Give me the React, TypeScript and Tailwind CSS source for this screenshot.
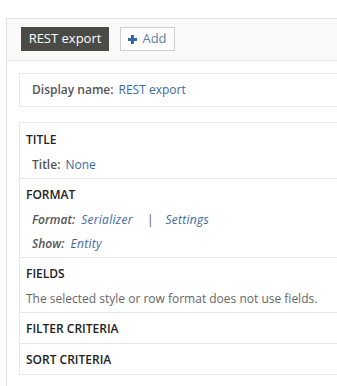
import React from "react";

const font = { fontFamily: '"Open Sans", "Noto Sans", sans-serif' };

const Section = ({
  title,
  children,
}: {
  title: string;
  children?: React.ReactNode;
}) => (
  <div
    className={`border-t border-[#e6e6e6] first:border-t-0 pt-[7px] first:pt-2 ${
      children ? "pb-px" : "pb-[5px]"
    }`}
  >
    <div className="h-[18px] leading-[18px] pl-[6px] text-[12px] font-semibold text-[#222]">
      {title}
    </div>
    {children && <div className="mt-1">{children}</div>}
  </div>
);

const Row = ({ children }: { children: React.ReactNode }) => (
  <div className="h-6 flex items-center pl-3 text-[12px]">{children}</div>
);

export default function App() {
  return (
    <div className="w-[337px] h-[386px] overflow-hidden bg-white" style={font}>
      <div className="pt-[18px] pl-[6px]">
        <div className="w-[420px] h-[368px] border-l border-t border-[#e3e3e3]">
          {/* tab bar */}
          <div className="h-[42px] bg-[#f9f9f9] border-b border-[#e6e6e6] flex items-start pt-2 pl-[14px] gap-[11px]">
            <div className="h-6 w-[88px] bg-[#4a4a47] text-white text-[13px] flex items-center justify-center">
              REST export
            </div>
            <button className="h-6 w-[55px] bg-white border border-[#cfcfcf] flex items-center justify-center gap-[5px] text-[13px] text-[#5b7fa9]">
              <svg width="9" height="9" viewBox="0 0 9 9">
                <path d="M3 0h3v3h3v3H6v3H3V6H0V3h3z" fill="#2d6aa6" />
              </svg>
              Add
            </button>
          </div>

          <div className="pl-3">
            {/* display name */}
            <div className="mt-3 h-[34px] border border-r-0 border-[#e8e8e8] flex items-center pl-3 text-[12px]">
              <span className="font-semibold text-[#555]">Display name:</span>
              <a className="ml-[5px] text-[#3b6aa0]">REST export</a>
            </div>

            {/* sections */}
            <div className="mt-[15px] border border-r-0 border-[#e8e8e8]">
              <Section title="TITLE">
                <Row>
                  <span className="font-semibold text-[#555]">Title:</span>
                  <a className="ml-[5px] text-[#3b6aa0]">None</a>
                </Row>
              </Section>
              <Section title="FORMAT">
                <Row>
                  <span className="italic font-semibold text-[#555]">Format:</span>
                  <a className="ml-[6px] italic text-[#3b6aa0] tracking-[0.3px]">Serializer</a>
                  <span className="ml-[14px] italic text-[#555]">|</span>
                  <a className="ml-[12px] italic text-[#3b6aa0] tracking-[0.3px]">Settings</a>
                </Row>
                <Row>
                  <span className="italic font-semibold text-[#555]">Show:</span>
                  <a className="ml-[6px] italic text-[#3b6aa0] tracking-[0.3px]">Entity</a>
                </Row>
              </Section>
              <Section title="FIELDS">
                <div className="h-6 flex items-center pl-[6px] text-[12px] text-[#666]">
                  The selected style or row format does not use fields.
                </div>
              </Section>
              <Section title="FILTER CRITERIA" />
              <Section title="SORT CRITERIA" />
            </div>
          </div>
        </div>
      </div>
    </div>
  );
}
